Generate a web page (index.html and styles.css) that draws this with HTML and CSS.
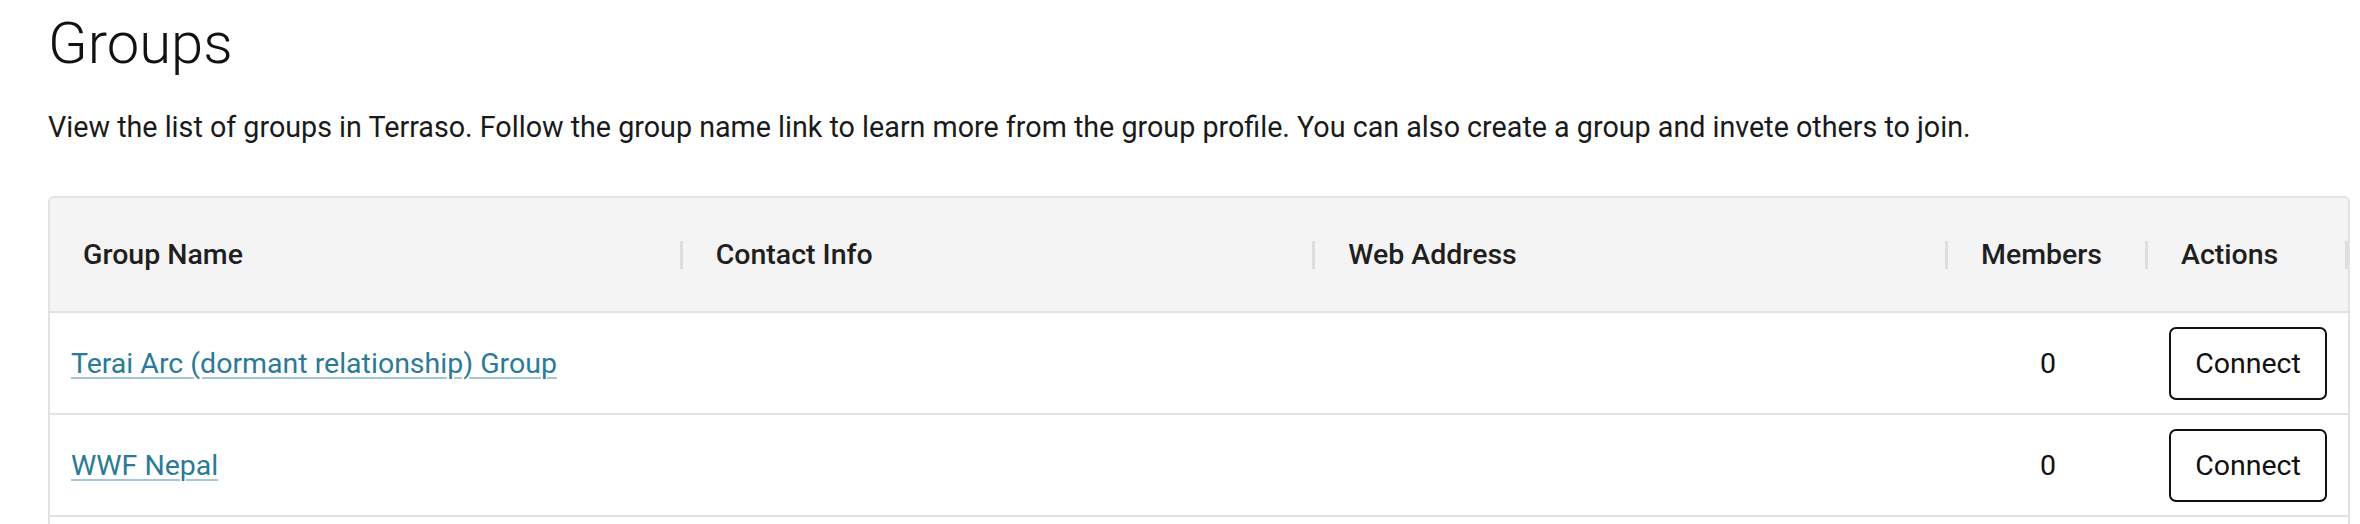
FILE: index.html
```html
<!DOCTYPE html>
<html lang="en">
<head>
<meta charset="utf-8">
<title>Groups</title>
<link rel="stylesheet" href="styles.css">
</head>
<body>
<main class="page">
  <h1 class="title">Groups</h1>
  <p class="intro">View the list of groups in Terraso. Follow the group name link to learn more from the group profile. You can also create a group and invete others to join.</p>
  <div class="grid" role="table">
    <div class="row head" role="row">
      <div class="hcell" role="columnheader"><span class="htitle">Group Name</span><span class="sep"></span></div>
      <div class="hcell" role="columnheader"><span class="htitle">Contact Info</span><span class="sep"></span></div>
      <div class="hcell" role="columnheader"><span class="htitle">Web Address</span><span class="sep"></span></div>
      <div class="hcell" role="columnheader"><span class="htitle">Members</span><span class="sep"></span></div>
      <div class="hcell" role="columnheader"><span class="htitle">Actions</span><span class="sep"></span></div>
    </div>
    <div class="row" role="row">
      <div class="cell" role="cell"><a class="link" href="#">Terai Arc (dormant relationship) Group</a></div>
      <div class="cell" role="cell"></div>
      <div class="cell" role="cell"></div>
      <div class="cell num" role="cell">0</div>
      <div class="cell act" role="cell"><button class="btn" type="button">Connect</button></div>
    </div>
    <div class="row" role="row">
      <div class="cell" role="cell"><a class="link" href="#">WWF Nepal</a></div>
      <div class="cell" role="cell"></div>
      <div class="cell" role="cell"></div>
      <div class="cell num" role="cell">0</div>
      <div class="cell act" role="cell"><button class="btn" type="button">Connect</button></div>
    </div>
    <div class="row" role="row">
      <div class="cell" role="cell"></div>
      <div class="cell" role="cell"></div>
      <div class="cell" role="cell"></div>
      <div class="cell num" role="cell"></div>
      <div class="cell act" role="cell"></div>
    </div>
  </div>
</main>
</body>
</html>
```

FILE: styles.css
```css
html, body {
  margin: 0;
  padding: 0;
  background: #ffffff;
}

body {
  font-family: Roboto, "Liberation Sans", Arial, sans-serif;
  color: #1a1a1a;
}

.page {
  padding: 0 10px 0 48px;
}

.title {
  margin: 0;
  padding-top: 6px;
  font-size: 58px;
  font-weight: 300;
  line-height: 74px;
  color: #111111;
}

.intro {
  margin: 26px 0 0 0;
  font-size: 28.7px;
  line-height: 42px;
  font-weight: 400;
  color: #1a1a1a;
}

.grid {
  margin-top: 48px;
  border: 2px solid #e2e2e2;
  border-radius: 6px;
  overflow: hidden;
}

.row {
  display: grid;
  grid-template-columns: 1fr 1fr 1fr 200px 200px;
  height: 100px;
  border-bottom: 2px solid #e2e2e2;
}

.row.head {
  height: 113px;
  background: #f4f4f4;
}

.hcell {
  display: flex;
  align-items: center;
  justify-content: space-between;
  padding-left: 33px;
}

.htitle {
  font-size: 28.5px;
  font-weight: 500;
  color: #1f1f1f;
}

.sep {
  width: 3px;
  height: 28px;
  background: #dedede;
}

.cell {
  display: flex;
  align-items: center;
  padding-left: 21px;
  font-size: 28.5px;
}

.cell.num {
  justify-content: center;
  padding-left: 0;
  color: #111111;
}

.cell.act {
  justify-content: center;
  padding-left: 0;
}

.link {
  color: #2a7a98;
  text-decoration: underline;
  text-decoration-color: #a3c7d5;
  text-decoration-thickness: 2px;
  text-underline-offset: 4px;
  font-size: 28.5px;
}

.btn {
  width: 158px;
  height: 73px;
  background: #ffffff;
  border: 2px solid #111111;
  border-radius: 7px;
  font-family: Roboto, "Liberation Sans", Arial, sans-serif;
  font-size: 28.5px;
  color: #111111;
  cursor: pointer;
  padding: 0;
}
```
